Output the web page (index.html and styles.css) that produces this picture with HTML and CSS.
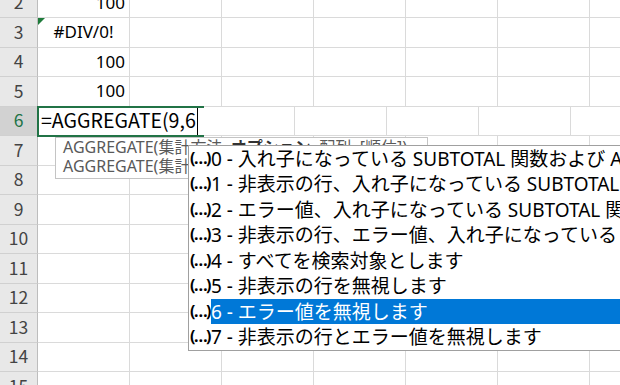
FILE: index.html
```html
<!DOCTYPE html>
<html lang="ja">
<head>
<meta charset="utf-8">
<title>AGGREGATE</title>
<link rel="stylesheet" href="styles.css">
</head>
<body>
<div class="sheet">
  <div class="row"><div class="rh">2</div><div class="cell num">100</div><div class="cell"></div><div class="cell"></div><div class="cell"></div><div class="cell"></div><div class="cell"></div><div class="cell"></div></div>
  <div class="row"><div class="rh">3</div><div class="cell err flag">#DIV/0!</div><div class="cell"></div><div class="cell"></div><div class="cell"></div><div class="cell"></div><div class="cell"></div><div class="cell"></div></div>
  <div class="row"><div class="rh">4</div><div class="cell num">100</div><div class="cell"></div><div class="cell"></div><div class="cell"></div><div class="cell"></div><div class="cell"></div><div class="cell"></div></div>
  <div class="row"><div class="rh">5</div><div class="cell num">100</div><div class="cell"></div><div class="cell"></div><div class="cell"></div><div class="cell"></div><div class="cell"></div><div class="cell"></div></div>
  <div class="row"><div class="rh sel">6</div><div class="cell active"><span class="formula">=AGGREGATE(9,6</span><span class="caret"></span></div><div class="cell"></div><div class="cell"></div><div class="cell"></div><div class="cell"></div><div class="cell"></div><div class="cell"></div></div>
  <div class="row"><div class="rh">7</div><div class="cell"></div><div class="cell"></div><div class="cell"></div><div class="cell"></div><div class="cell"></div><div class="cell"></div><div class="cell"></div></div>
  <div class="row"><div class="rh">8</div><div class="cell"></div><div class="cell"></div><div class="cell"></div><div class="cell"></div><div class="cell"></div><div class="cell"></div><div class="cell"></div></div>
  <div class="row"><div class="rh">9</div><div class="cell"></div><div class="cell"></div><div class="cell"></div><div class="cell"></div><div class="cell"></div><div class="cell"></div><div class="cell"></div></div>
  <div class="row"><div class="rh">10</div><div class="cell"></div><div class="cell"></div><div class="cell"></div><div class="cell"></div><div class="cell"></div><div class="cell"></div><div class="cell"></div></div>
  <div class="row"><div class="rh">11</div><div class="cell"></div><div class="cell"></div><div class="cell"></div><div class="cell"></div><div class="cell"></div><div class="cell"></div><div class="cell"></div></div>
  <div class="row"><div class="rh">12</div><div class="cell"></div><div class="cell"></div><div class="cell"></div><div class="cell"></div><div class="cell"></div><div class="cell"></div><div class="cell"></div></div>
  <div class="row"><div class="rh">13</div><div class="cell"></div><div class="cell"></div><div class="cell"></div><div class="cell"></div><div class="cell"></div><div class="cell"></div><div class="cell"></div></div>
  <div class="row"><div class="rh">14</div><div class="cell"></div><div class="cell"></div><div class="cell"></div><div class="cell"></div><div class="cell"></div><div class="cell"></div><div class="cell"></div></div>
  <div class="row"><div class="rh">15</div><div class="cell"></div><div class="cell"></div><div class="cell"></div><div class="cell"></div><div class="cell"></div><div class="cell"></div><div class="cell"></div></div>
</div>

<div class="tooltip">
  <div class="tip-line">AGGREGATE(集計方法, <b>オプション</b>, 配列, [順位])</div>
  <div class="tip-line">AGGREGATE(集計方法, <b>オプション</b>, 参照1, ...)</div>
</div>

<div class="dropdown">
  <div class="item"><span class="icon">(…)</span><span class="label">0 - 入れ子になっている SUBTOTAL 関数および AGGREGATE 関数を無視します</span></div>
  <div class="item"><span class="icon">(…)</span><span class="label">1 - 非表示の行、入れ子になっている SUBTOTAL 関数、および AGGREGATE 関数を無視します</span></div>
  <div class="item"><span class="icon">(…)</span><span class="label">2 - エラー値、入れ子になっている SUBTOTAL 関数、および AGGREGATE 関数を無視します</span></div>
  <div class="item"><span class="icon">(…)</span><span class="label">3 - 非表示の行、エラー値、入れ子になっている SUBTOTAL 関数、および AGGREGATE 関数を無視します</span></div>
  <div class="item"><span class="icon">(…)</span><span class="label">4 - すべてを検索対象とします</span></div>
  <div class="item"><span class="icon">(…)</span><span class="label">5 - 非表示の行を無視します</span></div>
  <div class="item sel"><span class="icon">(…)</span><span class="label">6 - エラー値を無視します</span></div>
  <div class="item"><span class="icon">(…)</span><span class="label">7 - 非表示の行とエラー値を無視します</span></div>
</div>
</body>
</html>
```

FILE: styles.css
```css
html, body {
  margin: 0;
  padding: 0;
}

body {
  width: 620px;
  height: 385px;
  overflow: hidden;
  position: relative;
  background: #ffffff;
  font-family: "Noto Sans", "Noto Sans CJK JP", sans-serif;
  color: #000000;
}

.sheet {
  margin-top: -11.5px;
}

.row {
  display: flex;
  height: 29.5px;
}

.rh {
  flex: 0 0 38px;
  box-sizing: border-box;
  background: #e8e8e8;
  border-right: 1px solid #bdbdbd;
  border-bottom: 1px solid #d0d0d0;
  display: flex;
  align-items: center;
  justify-content: center;
  padding-bottom: 2px;
  font-family: "Noto Sans CJK JP", sans-serif;
  font-size: 17.5px;
  color: #444444;
}

.rh.sel {
  background: #d2d2d2;
  color: #217346;
}

.cell {
  flex: 0 0 92px;
  box-sizing: border-box;
  border-right: 1px solid #dadada;
  border-bottom: 1px solid #dadada;
  display: flex;
  align-items: center;
  padding: 0 4px 1px 4px;
  font-size: 17px;
  position: relative;
  white-space: nowrap;
}

.num {
  justify-content: flex-end;
}

.err {
  justify-content: center;
}

.flag::before {
  content: "";
  position: absolute;
  left: 0;
  top: 0;
  border-top: 7px solid #1e7b3a;
  border-right: 7px solid transparent;
}

.active {
  border-right-color: transparent;
  padding-left: 3px;
  padding-bottom: 2px;
  z-index: 1;
  overflow: visible;
}

.active::after {
  content: "";
  position: absolute;
  left: -1px;
  top: -1px;
  right: -2px;
  bottom: -2px;
  border: 2px solid #217346;
  border-right: none;
  pointer-events: none;
}

.formula {
  font-family: "Noto Sans CJK JP", sans-serif;
  font-size: 19.6px;
}

.caret {
  display: inline-block;
  width: 1px;
  height: 28px;
  background: #000000;
  margin-left: 1px;
  margin-top: 2px;
}

.tooltip {
  position: absolute;
  left: 55px;
  top: 137px;
  width: 373px;
  height: 42px;
  box-sizing: border-box;
  border: 1px solid #c4c4c4;
  background: #ffffff;
  padding: 0 7px;
  font-family: "Noto Sans", "Noto Sans CJK JP", sans-serif;
  font-size: 16px;
  line-height: 19px;
  color: #595959;
  white-space: nowrap;
  overflow: hidden;
  z-index: 2;
}

.tooltip b {
  color: #333333;
}

.dropdown {
  position: absolute;
  left: 188px;
  top: 144.5px;
  width: 520px;
  border: 1px solid #a0a0a0;
  background: #ffffff;
  font-family: "Noto Sans", "Noto Sans CJK JP", sans-serif;
  font-size: 19px;
  color: #000000;
  z-index: 3;
}

.item {
  display: flex;
  height: 25.5px;
  align-items: stretch;
  white-space: nowrap;
}

.icon {
  flex: 0 0 22px;
  display: flex;
  align-items: center;
  justify-content: center;
  font-size: 16px;
  font-weight: bold;
  letter-spacing: -1.5px;
  padding-bottom: 1px;
}

.label {
  flex: 1;
  display: flex;
  align-items: center;
  padding-bottom: 1px;
}

.item.sel .label {
  background: #0078d7;
  color: #ffffff;
}
```
